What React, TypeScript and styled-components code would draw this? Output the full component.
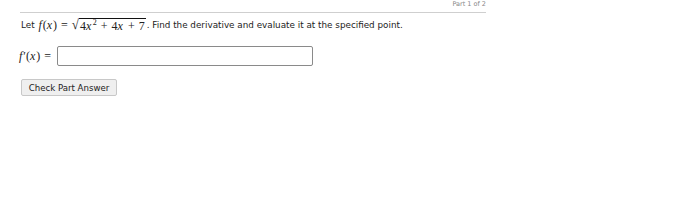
import React from 'react';
import styled, { createGlobalStyle } from 'styled-components';

const Global = createGlobalStyle`
  body {
    margin: 0;
    background: #fff;
    font-family: "DejaVu Sans", Verdana, sans-serif;
    color: #222;
  }
`

const Page = styled.div`
  width: 466px;
  padding: 0 0 0 20px;
`
const Header = styled.div`
  display: flex;
  justify-content: flex-end;
  height: 12px;
  border-bottom: 1px solid #cfcfcf;
  font-size: 6.5px;
  color: #888;
  line-height: 9px;
`
const Question = styled.p`
  margin: 0;
  padding: 5px 0 0 1px;
  font-size: 8.8px;
  line-height: 14px;
  display: flex;
  align-items: flex-end;
  white-space: nowrap;
`
const Math = styled.span`
  font-family: "Liberation Serif", "Times New Roman", serif;
  font-size: 12px;
  margin: 0 1px 0 1px;
  display: inline-flex;
  align-items: flex-end;
`
const Var = styled.i`
  font-style: italic;
  padding-right: 1px;
`
const Op = styled.span`
  margin: 0 4px;
`
const Radical = styled.span`
  font-size: 13px;
  line-height: 14px;
  transform: scaleY(1.1);
  transform-origin: bottom;
`
const Radicand = styled.span`
  border-top: 1px solid #111;
  padding: 1px 1px 0 1px;
  line-height: 12px;
`
const Sup = styled.sup`
  font-size: 8px;
  line-height: 0;
  padding-left: 0.5px;
`
const AnswerRow = styled.div`
  display: flex;
  align-items: center;
  margin-top: 14px;
`
const Label = styled(Math)`
  margin: 0 2px 0 -1px;
  align-items: center;
`
const AnswerInput = styled.input`
  width: 256px;
  height: 20px;
  box-sizing: border-box;
  border: 1px solid #8a8a8a;
  border-radius: 2px;
  padding: 0 4px;
  margin: 0;
  font-size: 10px;
  outline: none;
`
const Button = styled.button`
  margin: 13px 0 0 1px;
  width: 96px;
  height: 17px;
  box-sizing: border-box;
  background: #efefef;
  border: 1px solid #c8c8c8;
  border-radius: 2px;
  font-family: "DejaVu Sans", Verdana, sans-serif;
  font-size: 8.6px;
  color: #222;
  padding: 0;
  cursor: pointer;
`

function App() {
  return (
    <>
      <Global />
      <Page>
        <Header>Part 1 of 2</Header>
        <Question>
          Let&nbsp;
          <Math>
            <Var>f</Var>(<Var>x</Var>)<Op>=</Op>
            <Radical>√</Radical>
            <Radicand>
              4<Var>x</Var><Sup>2</Sup><Op>+</Op>4<Var>x</Var><Op>+</Op>7
            </Radicand>
          </Math>
          . Find the derivative and evaluate it at the specified point.
        </Question>
        <AnswerRow>
          <Label>
            <Var>f</Var>′(<Var>x</Var>)<Op>=</Op>
          </Label>
          <AnswerInput type="text" />
        </AnswerRow>
        <Button>Check Part Answer</Button>
      </Page>
    </>
  );
}

export default App;
